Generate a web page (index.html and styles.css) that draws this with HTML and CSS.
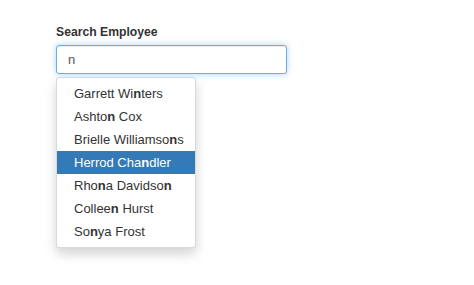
FILE: index.html
```html
<!DOCTYPE html>
<html>
<head>
<meta charset="utf-8">
<link rel="stylesheet" href="styles.css">
</head>
<body>
<div class="page">
  <form class="search-form">
    <div class="form-group">
      <label class="field-label">Search Employee</label>
      <input class="field-input" type="text" value="n">
      <ul class="typeahead">
        <li class="item"><span>Garrett Wi<b>n</b>ters</span></li>
        <li class="item"><span>Ashto<b>n</b> Cox</span></li>
        <li class="item"><span>Brielle Williamso<b>n</b>s</span></li>
        <li class="item active"><span>Herrod Cha<b>n</b>dler</span></li>
        <li class="item"><span>Rho<b>n</b>a Davidso<b>n</b></span></li>
        <li class="item"><span>Collee<b>n</b> Hurst</span></li>
        <li class="item"><span>So<b>n</b>ya Frost</span></li>
      </ul>
    </div>
    <button class="submit-btn" type="button" aria-label="Submit"></button>
  </form>
</div>
</body>
</html>
```

FILE: styles.css
```css
html, body {
  margin: 0;
  padding: 0;
  background: #ffffff;
  min-height: 100%;
}
body {
  font-family: "Liberation Sans", Arial, sans-serif;
  font-size: 13px;
  color: #333333;
}
.page {
  box-sizing: border-box;
  min-height: 285px;
  padding: 23px 0 0 56px;
}
.search-form {
  margin: 0;
  width: 231px;
}
.form-group {
  position: relative;
  margin-bottom: 11px;
}
.field-label {
  display: block;
  font-weight: bold;
  font-size: 12.2px;
  line-height: 18px;
  margin-bottom: 4px;
}
.field-input {
  display: block;
  box-sizing: border-box;
  width: 231px;
  height: 29px;
  padding: 4px 11px;
  font-family: "Liberation Sans", Arial, sans-serif;
  font-size: 13px;
  color: #555555;
  border: 1px solid #66afe9;
  border-radius: 3px;
  outline: none;
  box-shadow: inset 0 1px 1px rgba(0,0,0,.075), 0 0 6px rgba(102,175,233,.55);
  background: #fff;
}
.typeahead {
  position: absolute;
  top: 54px;
  left: 0;
  z-index: 10;
  list-style: none;
  margin: 0;
  padding: 4px 0;
  width: 140px;
  box-sizing: border-box;
  background: #fff;
  border: 1px solid rgba(0,0,0,.15);
  border-radius: 3px;
  box-shadow: 0 6px 12px rgba(0,0,0,.175);
}
.item span {
  display: block;
  padding: 0 0 0 17px;
  line-height: 23px;
  font-size: 13px;
  color: #333333;
  white-space: nowrap;
}
.item b {
  font-weight: bold;
}
.item.active span {
  background: #337ab7;
  color: #ffffff;
}
.submit-btn {
  display: block;
  width: 70px;
  height: 25px;
  padding: 0;
  background: #fff;
  border: 1px solid #bbb;
  border-radius: 3px;
  margin-top: 29px;
}
```
